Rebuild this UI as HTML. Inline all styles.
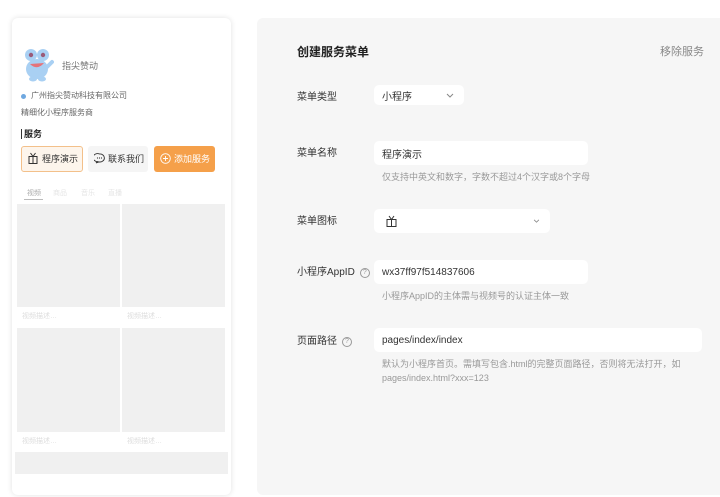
<!DOCTYPE html>
<html><head><meta charset="utf-8"><style>
*{margin:0;padding:0;box-sizing:border-box}
body{width:720px;height:497px;background:#fff;position:relative;overflow:hidden;font-family:"Liberation Sans","Noto Sans CJK SC",sans-serif;color:#333}
.a{position:absolute;white-space:nowrap}
.left{position:absolute;left:12px;top:18px;width:219px;height:477px;background:#fff;border-radius:6px;box-shadow:0 0 6px rgba(0,0,0,.12)}
.right{position:absolute;left:257px;top:18px;width:470px;height:477px;background:#f6f6f6;border-radius:6px}
.f{font-size:10px;color:#333}
.in{position:absolute;background:#fff;border-radius:5px;font-size:10px;padding-left:8px;display:flex;align-items:center}
.hint{position:absolute;font-size:9px;color:#999;line-height:14px}
.g{position:absolute;background:#f0f0f0}
.cap{position:absolute;background:#fff;font-size:7px;color:#ddd;padding-left:5px;line-height:20px}
.q{display:inline-block;width:10px;height:10px;border:1px solid #999;border-radius:50%;font-size:7px;color:#999;text-align:center;line-height:8px;margin-left:5px;vertical-align:1px}
.chev{position:absolute;right:10px;top:50%;margin-top:-2px}
</style></head><body>
<div class="left"></div>
<svg class="a" style="left:22px;top:45px" width="32" height="38" viewBox="0 0 32 38">
<ellipse cx="15" cy="24" rx="11" ry="10" fill="#a9d0f3"/>
<circle cx="9" cy="10" r="6" fill="#a9d0f3"/><circle cx="21" cy="10" r="6" fill="#a9d0f3"/>
<circle cx="9" cy="10" r="2.2" fill="#9a5a78"/><circle cx="21" cy="10" r="2.2" fill="#9a5a78"/>
<path d="M8 19 Q15 26 22 18 Z" fill="#e5737a"/>
<path d="M25 22 L30 17" stroke="#a9d0f3" stroke-width="4" stroke-linecap="round"/>
<ellipse cx="11" cy="34" rx="4" ry="2.5" fill="#a9d0f3"/><ellipse cx="20" cy="34" rx="4" ry="2.5" fill="#a9d0f3"/>
</svg>
<div class="a" style="left:62px;top:59px;font-size:9px;color:#777">指尖赞动</div>
<div class="a" style="left:21px;top:94px;width:5px;height:5px;border-radius:50%;background:#6fa8e0"></div>
<div class="a" style="left:31px;top:90px;font-size:8px;color:#666">广州指尖赞动科技有限公司</div>
<div class="a" style="left:21px;top:107px;font-size:8px;color:#666">精细化小程序服务商</div>
<div class="a" style="left:21px;top:129px;width:1px;height:10px;background:#333"></div>
<div class="a" style="left:24px;top:127px;font-size:9px;font-weight:bold;color:#222">服务</div>
<div class="a" style="left:21px;top:146px;width:62px;height:26px;border:1px solid #f3c08a;background:#fdf5ec;border-radius:3px;font-size:9px;line-height:24px;padding-left:20px">程序演示</div>
<svg class="a" style="left:28px;top:152px" width="10" height="12" viewBox="0 0 10 12"><path d="M1 4.5h8v7H1z M5 4.5v7 M5 4.5 L2.5 1 M5 4.5 L7.5 1" fill="none" stroke="#333" stroke-width="1"/></svg>
<div class="a" style="left:88px;top:146px;width:60px;height:26px;background:#f5f5f5;border-radius:3px;font-size:9px;line-height:26px;padding-left:20px">联系我们</div>
<svg class="a" style="left:94px;top:153px" width="11" height="11" viewBox="0 0 11 11"><path d="M5.5 1a4.5 4 0 1 0 -2 7.6L2 10l3-1.1A4.5 4 0 1 0 5.5 1z" fill="none" stroke="#333" stroke-width="0.9"/><circle cx="3.5" cy="5" r=".6" fill="#333"/><circle cx="5.5" cy="5" r=".6" fill="#333"/><circle cx="7.5" cy="5" r=".6" fill="#333"/></svg>
<div class="a" style="left:154px;top:146px;width:61px;height:26px;background:#f5a04a;border-radius:3px;font-size:9px;line-height:26px;padding-left:20px;color:#fff">添加服务</div>
<svg class="a" style="left:160px;top:153px" width="11" height="11" viewBox="0 0 11 11"><circle cx="5.5" cy="5.5" r="4.8" fill="none" stroke="#fff" stroke-width="0.9"/><path d="M5.5 3v5M3 5.5h5" stroke="#fff" stroke-width="0.9"/></svg>
<div class="a" style="left:27px;top:188px;font-size:7px;color:#aaa">视频</div>
<div class="a" style="left:24px;top:199px;width:19px;height:1px;background:#bbb"></div>
<div class="a" style="left:53px;top:188px;font-size:7px;color:#e5e5e5">商品</div>
<div class="a" style="left:81px;top:188px;font-size:7px;color:#e5e5e5">音乐</div>
<div class="a" style="left:108px;top:188px;font-size:7px;color:#e5e5e5">直播</div>
<div class="g" style="left:17px;top:204px;width:103px;height:103px"></div>
<div class="g" style="left:122px;top:204px;width:103px;height:103px"></div>
<div class="cap" style="left:17px;top:307px;width:103px;height:20px">视频描述…</div>
<div class="cap" style="left:122px;top:307px;width:103px;height:20px">视频描述…</div>
<div class="g" style="left:17px;top:328px;width:103px;height:104px"></div>
<div class="g" style="left:122px;top:328px;width:103px;height:104px"></div>
<div class="cap" style="left:17px;top:432px;width:103px;height:19px">视频描述…</div>
<div class="cap" style="left:122px;top:432px;width:103px;height:19px">视频描述…</div>
<div class="g" style="left:15px;top:452px;width:213px;height:22px"></div>

<div class="right"></div>
<div class="a" style="left:297px;top:43px;font-size:12px;font-weight:bold;color:#222">创建服务菜单</div>
<div class="a" style="left:660px;top:43px;font-size:11px;color:#888">移除服务</div>
<div class="a f" style="left:297px;top:88px">菜单类型</div>
<div class="in" style="left:374px;top:85px;width:90px;height:20px">小程序<svg class="chev" width="8" height="5" viewBox="0 0 8 5"><path d="M1 1l3 3 3-3" fill="none" stroke="#888" stroke-width="1"/></svg></div>
<div class="a f" style="left:297px;top:144px">菜单名称</div>
<div class="in" style="left:374px;top:141px;width:214px;height:24px">程序演示</div>
<div class="hint" style="left:382px;top:170px">仅支持中英文和数字，字数不超过4个汉字或8个字母</div>
<div class="a f" style="left:297px;top:212px">菜单图标</div>
<div class="in" style="left:374px;top:209px;width:176px;height:24px"><svg width="11" height="12" viewBox="0 0 11 12" style="margin-left:4px"><path d="M1 4.5h9v7H1z M5.5 4.5v7 M5.5 4.5 L3 1 M5.5 4.5 L8 1" fill="none" stroke="#333" stroke-width="1"/></svg><svg class="chev" width="7" height="4" viewBox="0 0 8 5"><path d="M1 1l3 3 3-3" fill="none" stroke="#888" stroke-width="1"/></svg></div>
<div class="a f" style="left:297px;top:263px">小程序AppID<span class="q">?</span></div>
<div class="in" style="left:374px;top:260px;width:214px;height:24px">wx37ff97f514837606</div>
<div class="hint" style="left:382px;top:289px">小程序AppID的主体需与视频号的认证主体一致</div>
<div class="a f" style="left:297px;top:332px">页面路径<span class="q">?</span></div>
<div class="in" style="left:374px;top:328px;width:328px;height:24px">pages/index/index</div>
<div class="hint" style="left:382px;top:357px">默认为小程序首页。需填写包含.html的完整页面路径，否则将无法打开，如<br>pages/index.html?xxx=123</div>
</body></html>
